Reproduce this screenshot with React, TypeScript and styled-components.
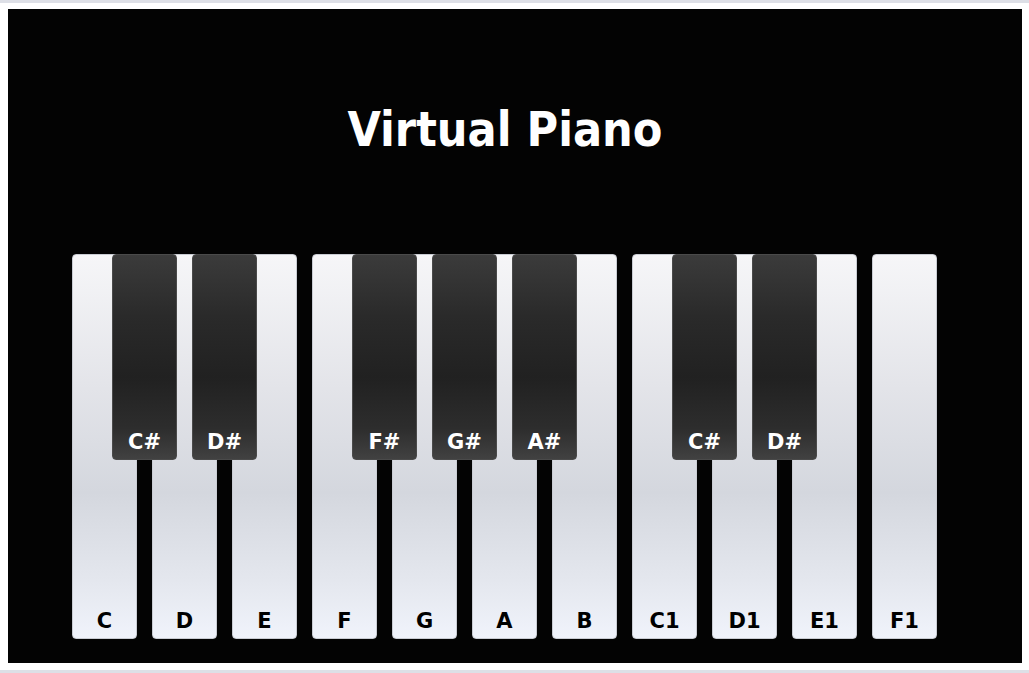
import styled, { createGlobalStyle } from 'styled-components'

const GlobalStyle = createGlobalStyle`
  html, body {
    margin: 0;
    padding: 0;
    background: #ffffff;
  }
  * {
    box-sizing: border-box;
  }
`

const Frame = styled.div`
  height: 673px;
  border-top: 3px solid #dddfe6;
  border-bottom: 3px solid #dddfe6;
  padding: 6px 7px 0 8px;
  overflow: hidden;
`

const Panel = styled.main`
  height: 654px;
  background: #030303;
  padding-top: 92px;
`

const Title = styled.h1`
  margin: 0;
  height: 56px;
  line-height: 56px;
  text-align: center;
  color: #ffffff;
  font-family: 'DejaVu Sans Condensed', 'DejaVu Sans', sans-serif;
  font-weight: bold;
  font-size: 48px;
  padding-right: 20px;
`

const Keyboard = styled.div`
  display: flex;
  gap: 15px;
  margin-top: 97px;
  padding-left: 64px;
`

const WhiteKey = styled.div`
  position: relative;
  width: 65px;
  height: 385px;
  border-radius: 4px;
  border: 1px solid #c9ccd3;
  background: linear-gradient(180deg, #f6f6f8 0%, #e3e4e9 35%, #d4d7de 62%, #e4e7ee 85%, #f0f3fb 100%);
  display: flex;
  align-items: flex-end;
  justify-content: center;
  padding-bottom: 5px;
`

const BlackKey = styled.div`
  position: absolute;
  top: -1px;
  left: 39px;
  z-index: 2;
  width: 65px;
  height: 206px;
  border-radius: 4px;
  border: 1px solid #4a4a4a;
  background: linear-gradient(180deg, #3b3b3b 0%, #2a2a2a 30%, #212121 60%, #2d2d2d 85%, #414141 100%);
  display: flex;
  align-items: flex-end;
  justify-content: center;
  padding-bottom: 5px;
`

const Label = styled.span<{ $dark?: boolean }>`
  font-family: 'DejaVu Sans', Verdana, sans-serif;
  font-weight: bold;
  font-size: 21px;
  line-height: 24px;
  color: ${props => (props.$dark ? '#ffffff' : '#000000')};
`

const keys: { note: string; sharp?: string }[] = [
  { note: 'C', sharp: 'C#' },
  { note: 'D', sharp: 'D#' },
  { note: 'E' },
  { note: 'F', sharp: 'F#' },
  { note: 'G', sharp: 'G#' },
  { note: 'A', sharp: 'A#' },
  { note: 'B' },
  { note: 'C1', sharp: 'C#' },
  { note: 'D1', sharp: 'D#' },
  { note: 'E1' },
  { note: 'F1' },
]

export default function App() {
  return (
    <Frame>
      <GlobalStyle />
      <Panel>
        <Title>Virtual Piano</Title>
        <Keyboard>
          {keys.map(k => (
            <WhiteKey key={k.note}>
              {k.sharp && (
                <BlackKey>
                  <Label $dark>{k.sharp}</Label>
                </BlackKey>
              )}
              <Label>{k.note}</Label>
            </WhiteKey>
          ))}
        </Keyboard>
      </Panel>
    </Frame>
  )
}
